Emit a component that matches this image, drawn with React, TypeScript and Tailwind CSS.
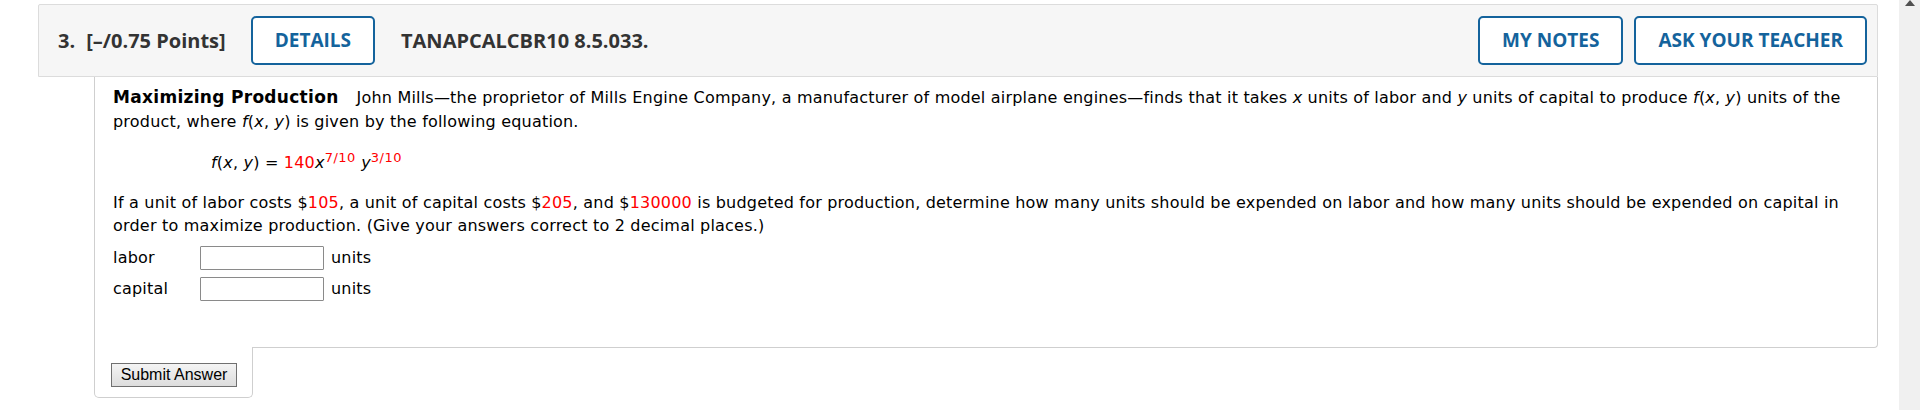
import React from 'react';

const Btn: React.FC<{ label: string }> = ({ label }) => (
  <button
    type="button"
    className="h-[49px] px-[22px] border-2 border-[#14639c] rounded-[5px] bg-white text-[#14639c] text-[19px] font-bold"
  >
    {label}
  </button>
);

const Red: React.FC<{ children: React.ReactNode }> = ({ children }) => (
  <span className="text-[#ff0000]">{children}</span>
);

export default function App() {
  return (
    <div className="flex h-[410px] w-[1920px] overflow-hidden bg-white">
      <div className="flex-1 pt-[4px] pr-[21px]">
        {/* question header */}
        <div className="ml-[38px] h-[73px] flex items-center bg-[#f6f6f6] border border-[#dcdcdc] rounded-t-[2px] pl-[19px] pr-[10px] font-['Open_Sans',sans-serif] text-[#333333]">
          <span className="text-[20px] font-bold">3.</span>
          <span className="ml-[11px] text-[20px] font-bold">[–/0.75 Points]</span>
          <div className="ml-[25px]">
            <Btn label="DETAILS" />
          </div>
          <span className="ml-[26px] text-[20px] font-bold">TANAPCALCBR10 8.5.033.</span>
          <div className="ml-auto flex gap-[11px]">
            <Btn label="MY NOTES" />
            <Btn label="ASK YOUR TEACHER" />
          </div>
        </div>

        {/* question body */}
        <div className="ml-[94px] border-l border-r border-b border-[#cfcfcf] rounded-br-[4px] pt-[8px] pl-[18px] pr-[16px] h-[271px] font-['DejaVu_Sans',Verdana,sans-serif] text-[16px] tracking-[0.2px] text-black">
          <p className="leading-[24px]">
            <span className="font-bold text-[17px] tracking-[0.3px]">Maximizing Production</span>
            <span className="ml-[18px]">
              John Mills—the proprietor of Mills Engine Company, a manufacturer of model airplane engines—finds that it takes <i>x</i> units of labor and <i>y</i> units of capital to produce <i>f</i>(<i>x</i>, <i>y</i>) units of the
            </span>
            <br />
            product, where <i>f</i>(<i>x</i>, <i>y</i>) is given by the following equation.
          </p>
          <div className="mt-[17px] ml-[98px] leading-[23px]">
            <i>f</i>(<i>x</i>, <i>y</i>) = <Red>140</Red>
            <i>x</i>
            <sup className="text-[13px] tracking-[0.5px] text-[#ff0000]">7/10</sup> <i>y</i>
            <sup className="text-[13px] tracking-[0.5px] text-[#ff0000]">3/10</sup>
          </div>
          <p className="mt-[17px] leading-[23px]">
            If a unit of labor costs $<Red>105</Red>, a unit of capital costs $<Red>205</Red>, and $<Red>130000</Red> is budgeted for production, determine how many units should be expended on labor and how many units should be expended on capital in
            <br />
            order to maximize production. (Give your answers correct to 2 decimal places.)
          </p>
          <div className="mt-[9px] flex flex-col gap-[7px]">
            {['labor', 'capital'].map((l) => (
              <div key={l} className="flex items-center h-[24px]">
                <span className="w-[87px]">{l}</span>
                <input
                  type="text"
                  className="w-[124px] h-[24px] border border-[#8a8a8a] rounded-[1px] bg-white"
                />
                <span className="ml-[7px]">units</span>
              </div>
            ))}
          </div>
        </div>

        {/* submit tab */}
        <div className="ml-[94px] -mt-px w-[159px] h-[51px] bg-white border-l border-r border-b border-[#cfcfcf] rounded-b-[5px] pl-[16px] pt-[15px]">
          <button
            type="button"
            className="w-[126px] h-[24px] border border-[#707070] bg-gradient-to-b from-[#f4f4f4] to-[#dddddd] font-['Liberation_Sans',Arial,sans-serif] text-[16px] leading-none text-black"
          >
            Submit Answer
          </button>
        </div>
      </div>

      {/* scrollbar */}
      <div className="w-[21px] h-[410px] bg-[#f0f0f0] flex justify-center">
        <svg width="10" height="6" viewBox="0 0 10 6">
          <polygon points="5,0 10,6 0,6" fill="#505050" />
        </svg>
      </div>
    </div>
  );
}
